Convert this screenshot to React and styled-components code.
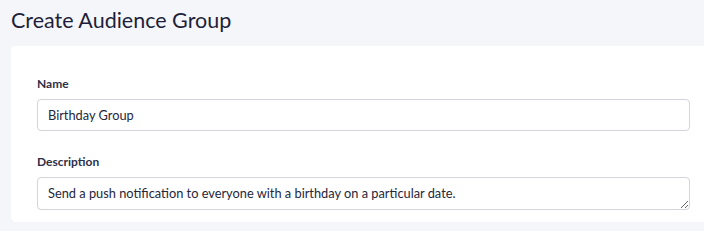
import React from "react";
import styled, { createGlobalStyle } from "styled-components";

const Global = createGlobalStyle`
  html, body { margin: 0; padding: 0; background: #f5f6fa; overflow: hidden; }
  body { font-family: Lato, "Open Sans", sans-serif; }
  * { box-sizing: border-box; }
`;

const Page = styled.div`
  padding: 7px 0 0 11px;
`;

const Title = styled.h1`
  margin: 0 0 13px 0;
  font-size: 21.5px;
  line-height: 26px;
  font-weight: 400;
  color: #1e1f3a;
`;

const Card = styled.div`
  background: #ffffff;
  border-radius: 4px 0 0 4px;
  padding: 30px 14px 12px 26px;
  box-shadow: 0 1px 0 #eceef3;
`;

const Field = styled.div`
  display: flex;
  flex-direction: column;
  margin-top: ${(p) => (p.$first ? "0" : "23px")};
`;

const Label = styled.label`
  font-size: 12px;
  line-height: 15px;
  font-weight: 700;
  color: #2e3047;
  margin-bottom: 8px;
`;

const Input = styled.input`
  height: 32px;
  border: 1px solid #d3d4dc;
  border-radius: 4px;
  padding: 0 10px;
  font-family: Lato, sans-serif;
  font-size: 12.8px;
  color: #24263a;
  background: #fff;
  outline: none;
`;

const TextArea = styled.textarea`
  height: 33px;
  border: 1px solid #d3d4dc;
  border-radius: 4px;
  padding: 7px 10px 6px;
  font-family: Lato, sans-serif;
  font-size: 12.8px;
  line-height: 16px;
  color: #24263a;
  background: #fff;
  outline: none;
  resize: vertical;
  overflow: hidden;
`;

export default function App() {
  return (
    <>
      <Global />
      <Page>
        <Title>Create Audience Group</Title>
        <Card>
          <Field $first>
            <Label>Name</Label>
            <Input defaultValue="Birthday Group" />
          </Field>
          <Field>
            <Label>Description</Label>
            <TextArea
              rows={1}
              defaultValue="Send a push notification to everyone with a birthday on a particular date."
            />
          </Field>
        </Card>
      </Page>
    </>
  );
}
